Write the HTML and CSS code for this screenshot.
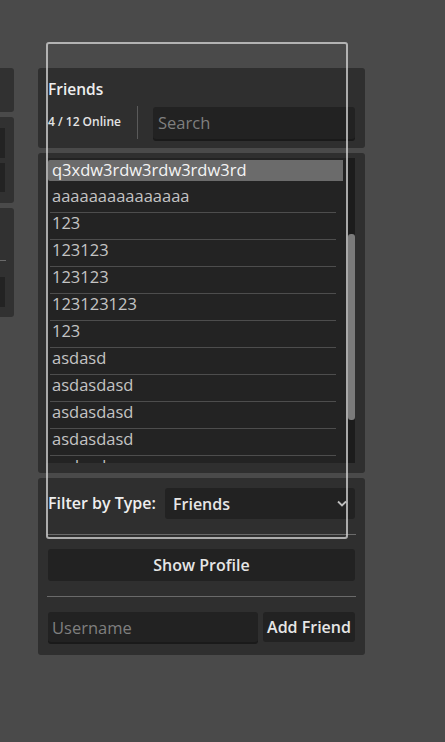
FILE: index.html
```html
<!DOCTYPE html>
<html>
<head>
<meta charset="utf-8">
<link rel="stylesheet" href="styles.css">
</head>
<body>
<div class="screen">
  <div class="side">
    <div class="stub stub1"></div>
    <div class="stub stub2">
      <div class="stub-field"></div>
      <div class="stub-field"></div>
    </div>
    <div class="stub stub3">
      <div class="stub-line"></div>
      <div class="stub-field"></div>
    </div>
  </div>
  <div class="main">
    <div class="panel header">
      <div class="title">Friends</div>
      <div class="header-row">
        <div class="online">4 / 12 Online</div>
        <div class="vsep"></div>
        <div class="field search"><span class="placeholder">Search</span></div>
      </div>
    </div>
    <div class="panel listpanel">
      <div class="list">
        <div class="rows">
          <div class="row selected">q3xdw3rdw3rdw3rdw3rd</div>
          <div class="row">aaaaaaaaaaaaaaa</div>
          <div class="row">123</div>
          <div class="row">123123</div>
          <div class="row">123123</div>
          <div class="row">123123123</div>
          <div class="row">123</div>
          <div class="row">asdasd</div>
          <div class="row">asdasdasd</div>
          <div class="row">asdasdasd</div>
          <div class="row">asdasdasd</div>
          <div class="row">asdasd</div>
        </div>
        <div class="scrollbar"><div class="grabber"></div></div>
      </div>
    </div>
    <div class="panel bottom">
      <div class="filter-row">
        <div class="label">Filter by Type:</div>
        <div class="field select"><span>Friends</span>
          <svg class="chev" width="10" height="7" viewBox="0 0 10 7"><path d="M1 1.5 L5 5.5 L9 1.5" fill="none" stroke="#bdbdbd" stroke-width="1.8"/></svg>
        </div>
      </div>
      <div class="hsep"></div>
      <div class="button wide">Show Profile</div>
      <div class="hsep"></div>
      <div class="add-row">
        <div class="field username"><span class="placeholder">Username</span></div>
        <div class="button add">Add Friend</div>
      </div>
    </div>
  </div>
  <div class="outline"></div>
</div>
</body>
</html>
```

FILE: styles.css
```css
html, body {
  margin: 0;
  padding: 0;
  background: #4a4a4a;
  font-family: "Open Sans", "Noto Sans", sans-serif;
  color: #e6e6e6;
}
.screen {
  position: relative;
  width: 445px;
  height: 742px;
  display: flex;
  overflow: hidden;
}
.side {
  width: 14px;
  padding-top: 68px;
  display: flex;
  flex-direction: column;
  gap: 5px;
}
.stub {
  background: #313131;
  border-radius: 0 3px 3px 0;
  box-sizing: border-box;
}
.stub1 { height: 44px; }
.stub2 {
  height: 86px;
  padding: 11px 0;
  display: flex;
  flex-direction: column;
  gap: 5px;
}
.stub3 {
  height: 109px;
  padding-top: 52px;
}
.stub-field {
  width: 5px;
  height: 30px;
  background: #232323;
}
.stub-line {
  width: 6px;
  height: 1px;
  background: #6a6a6a;
  margin-bottom: 16px;
}
.main {
  margin-left: 24px;
  width: 327px;
  padding-top: 68px;
  display: flex;
  flex-direction: column;
  gap: 5px;
}
.panel {
  background: #2f2f2f;
  border-radius: 3px;
  box-sizing: border-box;
}
.header {
  height: 80px;
  padding: 11px 10px 0 10px;
}
.title {
  font-size: 15.5px;
  font-weight: 600;
  line-height: 21px;
  color: #eeeeee;
}
.header-row {
  margin-top: 6px;
  display: flex;
  align-items: center;
  height: 33px;
}
.online {
  font-size: 12px;
  font-weight: 600;
  color: #e4e4e4;
  width: 89px;
  margin-top: -2px;
}
.vsep {
  width: 1px;
  height: 33px;
  background: #5a5a5a;
}
.field {
  background: #222222;
  border-radius: 3px;
  box-sizing: border-box;
  display: flex;
  align-items: center;
  font-size: 16.5px;
  font-weight: 500;
}
.search {
  margin-left: 15px;
  flex: 1;
  height: 32px;
  padding-left: 5px;
  box-shadow: 0 2px 0 #1a1a1a;
}
.placeholder {
  color: #7f7f7f;
}
.listpanel {
  height: 320px;
  padding: 5px 10px 10px 8px;
}
.list {
  height: 305px;
  background: #232323;
  display: flex;
  overflow: hidden;
}
.rows {
  flex: 1;
  padding: 2px 0 0 4px;
  overflow: hidden;
}
.row {
  height: 27px;
  box-sizing: border-box;
  border-bottom: 1px solid #4d4d4d;
  margin-right: 7px;
  font-size: 16.5px;
  font-weight: 500;
  line-height: 20px;
  color: #c4c4c4;
  padding-left: 2px;
}
.row.selected {
  background: #6b6b6b;
  color: #f4f4f4;
  border-radius: 2px;
  height: 21px;
  border-bottom: none;
  margin-right: -4px;
  margin-left: -2px;
  padding-left: 4px;
  line-height: 19px;
  margin-bottom: 5px;
}
.scrollbar {
  width: 7px;
  margin-left: 5px;
  background: #1c1c1c;
  position: relative;
}
.grabber {
  margin-top: 76px;
  height: 186px;
  background: #7b7b7b;
  border-radius: 3px;
}
.bottom {
  height: 177px;
  padding: 10px 10px 0 10px;
  display: flex;
  flex-direction: column;
}
.filter-row {
  display: flex;
  align-items: center;
  height: 31px;
}
.label {
  font-size: 16px;
  font-weight: 600;
  color: #eeeeee;
  width: 117px;
  margin-top: -2px;
}
.select {
  flex: 1;
  height: 31px;
  padding-left: 8px;
  padding-right: 8px;
  justify-content: space-between;
  color: #e6e6e6;
  font-size: 16px;
  font-weight: 600;
}
.hsep {
  height: 1px;
  background: #6a6a6a;
  margin: 15px -1px 0 -1px;
}
.button {
  background: #222222;
  border-radius: 3px;
  font-size: 16px;
  font-weight: 600;
  color: #e6e6e6;
  display: flex;
  align-items: center;
  justify-content: center;
  box-sizing: border-box;
}
.wide {
  height: 32px;
  margin-top: 14px;
}
.wide + .hsep {
  margin-top: 15px;
}
.add-row {
  margin-top: 15px;
  display: flex;
  gap: 5px;
  height: 30px;
}
.username {
  flex: 1;
  height: 30px;
  padding-left: 4px;
  box-shadow: 0 2px 0 #1a1a1a;
}
.add {
  width: 92px;
  height: 30px;
  font-size: 16px;
}
.outline {
  position: absolute;
  left: 46px;
  top: 42px;
  width: 302px;
  height: 497px;
  box-sizing: border-box;
  border: 2px solid rgba(215, 215, 215, 0.75);
  border-radius: 3px;
  pointer-events: none;
}
```
